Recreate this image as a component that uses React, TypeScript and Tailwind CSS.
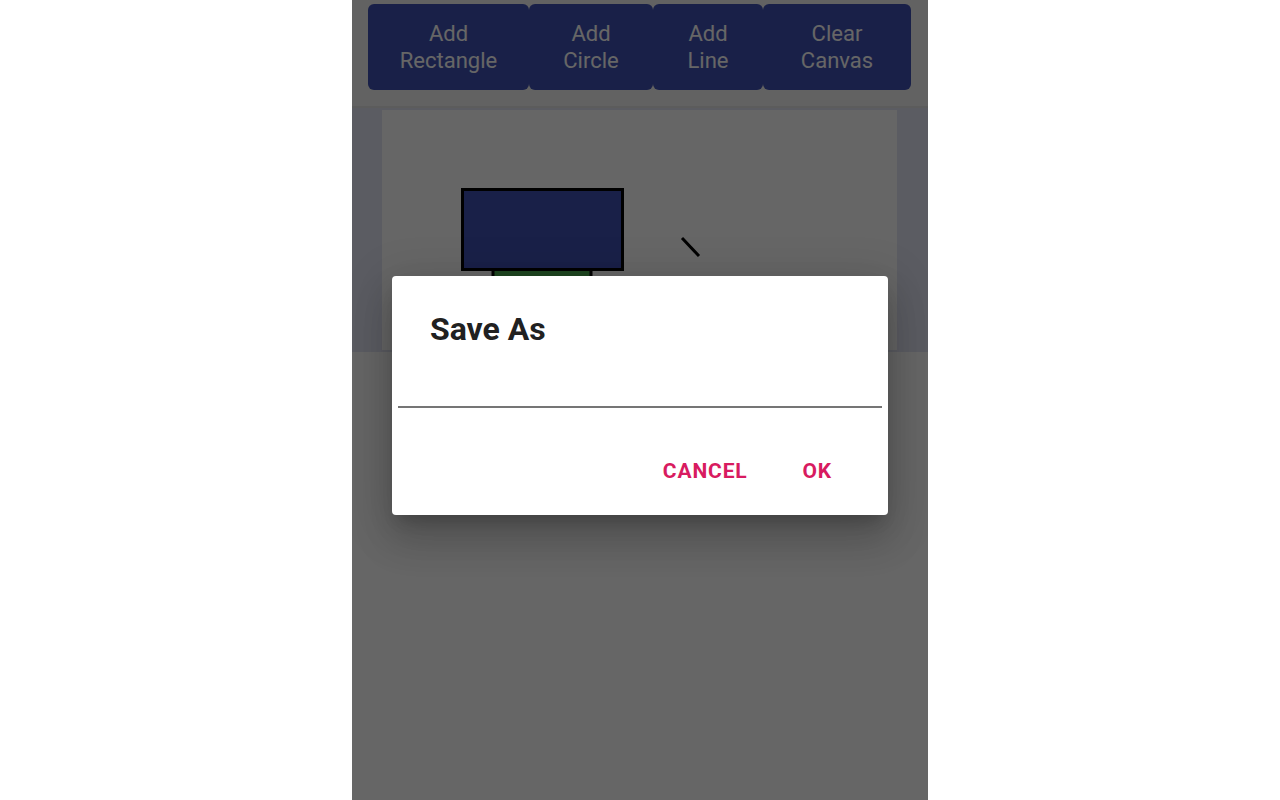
import React from "react";

const tools = [
  { top: "Add", bottom: "Rectangle", width: "w-[161px]" },
  { top: "Add", bottom: "Circle", width: "w-[124px]" },
  { top: "Add", bottom: "Line", width: "w-[110px]" },
  { top: "Clear", bottom: "Canvas", width: "w-[148px]" },
];

function Toolbar() {
  return (
    <div className="h-[108px] bg-[#f5f5f5] border-b-2 border-[#e6e6e6] px-4 pt-1">
      <div className="flex">
        {tools.map((t) => (
          <button
            key={t.bottom}
            className={`${t.width} h-[86px] rounded-[6px] bg-[#3f51b5] text-white text-[22px] leading-[27px] flex flex-col items-center justify-center`}
          >
            <span>{t.top}</span>
            <span>{t.bottom}</span>
          </button>
        ))}
      </div>
    </div>
  );
}

function DrawingCanvas() {
  return (
    <div className="bg-[#e3e6f5] px-[30px] py-[2px]">
      <svg width="515" height="240" className="block bg-white">
        <rect x="111" y="150" width="98" height="60" fill="#4caf50" stroke="#000" strokeWidth="3" />
        <rect x="80.5" y="79.5" width="160" height="80" fill="#3f51b5" stroke="#000" strokeWidth="3" />
        <line x1="300" y1="128" x2="317" y2="146" stroke="#000" strokeWidth="3" />
      </svg>
    </div>
  );
}

function SaveDialog() {
  return (
    <div className="absolute left-[40px] top-[276px] w-[496px] h-[239px] bg-white rounded-[4px] shadow-[0_11px_15px_-7px_rgba(0,0,0,0.2),0_24px_38px_3px_rgba(0,0,0,0.14),0_9px_46px_8px_rgba(0,0,0,0.12)] flex flex-col">
      <h2 className="pl-[38px] pt-[34px] text-[32px] leading-[38px] font-bold text-[#212121]">Save As</h2>
      <div className="mx-[6px] mt-[58px] border-b-[2px] border-[#757575]" />
      <div className="flex justify-end items-center gap-[55px] pr-[56px] mt-[48px]">
        <button className="text-[21px] font-bold tracking-[0.04em] text-[#d81b60]">CANCEL</button>
        <button className="text-[21px] font-bold tracking-[0.04em] text-[#d81b60]">OK</button>
      </div>
    </div>
  );
}

export default function App() {
  return (
    <div className="min-h-screen bg-white" style={{ fontFamily: "Roboto, 'Liberation Sans', sans-serif" }}>
      <div className="relative w-[576px] h-screen mx-auto bg-white overflow-hidden">
        <Toolbar />
        <DrawingCanvas />
        <div className="absolute inset-0 bg-[rgba(0,0,0,0.6)]" />
        <SaveDialog />
      </div>
    </div>
  );
}
